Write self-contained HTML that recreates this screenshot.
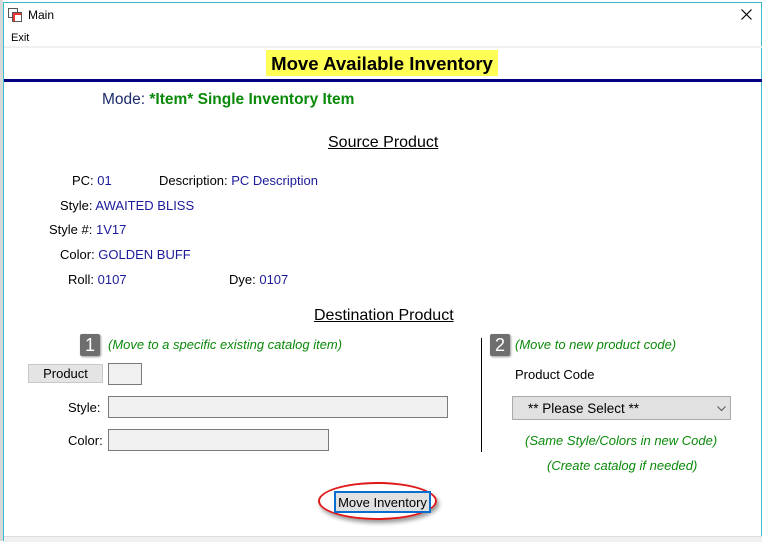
<!DOCTYPE html>
<html><head><style>
body{margin:0;width:765px;height:541px;position:relative;overflow:hidden;background:#fff;font-family:"Liberation Sans",Arial,sans-serif;font-size:13px;color:#000}
.a{position:absolute;white-space:nowrap;line-height:15px}
.b{color:#1a1a9a}
.g{color:#0a8a0a;font-style:italic}
.box{position:absolute;background:#f0f0f0;border:1px solid #7a7a7a;box-sizing:border-box}
.num{position:absolute;width:20px;height:22px;background:#6e6e6e;color:#fff;font-size:18px;text-align:center;line-height:22px;border-radius:2px;box-shadow:1px 1px 2px #999}
</style></head><body>
<div style="position:absolute;left:0;top:0;width:3px;height:541px;background:#d8d8d8"></div>
<div style="position:absolute;left:3px;top:2px;width:759px;height:539px;border:1px solid #3cbccc;border-bottom:none;box-sizing:border-box"></div>
<div style="position:absolute;left:8px;top:8px;width:8px;height:8px;border:1.5px solid #555;background:#fff"></div>
<div style="position:absolute;left:12px;top:12px;width:8px;height:8px;border:1.5px solid #555;background:#fff;box-shadow:inset 2px 2px 0 #e33"></div>
<div class="a" style="left:28px;top:8px;font-size:12px">Main</div>
<svg style="position:absolute;left:741px;top:9px" width="11" height="11"><path d="M0.5 0.5L10.5 10.5M10.5 0.5L0.5 10.5" stroke="#000" stroke-width="1.2"/></svg>
<div class="a" style="left:11px;top:31px;font-size:11px">Exit</div>
<div style="position:absolute;left:4px;top:46px;width:758px;height:2px;background:#f0f0f0"></div>
<div class="a" style="left:266px;top:50px;width:232px;height:26px;background:#ffff55;font-size:18.6px;font-weight:bold;line-height:28px;text-align:center">Move Available Inventory</div>
<div style="position:absolute;left:4px;top:79px;width:758px;height:3px;background:#000080"></div>
<div class="a" style="left:102px;top:91px;font-size:15.5px;line-height:18px;color:#1a2a6a">Mode: <span style="color:#0a8a0a;font-weight:bold">*Item* Single Inventory Item</span></div>
<div class="a" style="left:328px;top:134px;font-size:16px;line-height:18px;text-decoration:underline">Source Product</div>
<div class="a" style="left:72px;top:173px">PC: <span class="b">01</span></div>
<div class="a" style="left:159px;top:173px">Description: <span class="b">PC Description</span></div>
<div class="a" style="left:60px;top:198px">Style: <span class="b">AWAITED BLISS</span></div>
<div class="a" style="left:49px;top:222px">Style #: <span class="b">1V17</span></div>
<div class="a" style="left:60px;top:247px">Color: <span class="b">GOLDEN BUFF</span></div>
<div class="a" style="left:68px;top:272px">Roll: <span class="b">0107</span></div>
<div class="a" style="left:229px;top:272px">Dye: <span class="b">0107</span></div>
<div class="a" style="left:314px;top:307px;font-size:16px;line-height:18px;text-decoration:underline">Destination Product</div>
<div class="num" style="left:80px;top:334px">1</div>
<div class="a g" style="left:108px;top:337px">(Move to a specific existing catalog item)</div>
<div class="box" style="left:28px;top:364px;width:75px;height:19px;border-color:#c8c8c8;background:#e4e4e4;text-align:center;line-height:17px">Product</div>
<div class="box" style="left:108px;top:363px;width:34px;height:22px"></div>
<div class="a" style="left:68px;top:400px">Style:</div>
<div class="box" style="left:108px;top:396px;width:340px;height:22px"></div>
<div class="a" style="left:68px;top:433px">Color:</div>
<div class="box" style="left:108px;top:429px;width:221px;height:22px"></div>
<div style="position:absolute;left:481px;top:338px;width:1px;height:114px;background:#000"></div>
<div class="num" style="left:490px;top:334px">2</div>
<div class="a g" style="left:515px;top:337px">(Move to new product code)</div>
<div class="a" style="left:515px;top:367px">Product Code</div>
<div class="box" style="left:512px;top:396px;width:219px;height:24px;border-color:#aaa;background:#e1e1e1"></div>
<div class="a" style="left:528px;top:401px;font-size:13.5px">** Please Select **</div>
<svg style="position:absolute;left:717px;top:406px" width="9" height="6"><path d="M0.5 0.5L4.5 4.5L8.5 0.5" fill="none" stroke="#555" stroke-width="1"/></svg>
<div class="a g" style="left:525px;top:433px">(Same Style/Colors in new Code)</div>
<div class="a g" style="left:547px;top:458px">(Create catalog if needed)</div>
<div style="position:absolute;left:318px;top:482px;width:119px;height:38px;border:2px solid #e01818;border-radius:50%;box-sizing:border-box;box-shadow:2px 3px 4px #999"></div>
<div class="box" style="left:334px;top:491px;width:97px;height:22px;border:2px solid #0a6ed0;background:#e1e1e1;text-align:center;line-height:19px">Move Inventory</div>
<div style="position:absolute;left:4px;top:536px;width:758px;height:5px;background:#f0f0f0;border-top:1px solid #ddd"></div>
</body></html>
